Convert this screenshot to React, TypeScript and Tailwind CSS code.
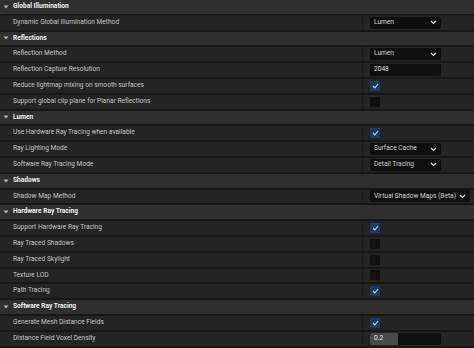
import React from "react";

type Field =
  | { kind: "select"; value: string; wide?: boolean }
  | { kind: "text"; value: string }
  | { kind: "check"; on: boolean }
  | { kind: "slider"; value: string; pct: number };

type Item = { label: string; field: Field };
type Section = { title: string; items: Item[] };

const sections: Section[] = [
  {
    title: "Global Illumination",
    items: [{ label: "Dynamic Global Illumination Method", field: { kind: "select", value: "Lumen" } }],
  },
  {
    title: "Reflections",
    items: [
      { label: "Reflection Method", field: { kind: "select", value: "Lumen" } },
      { label: "Reflection Capture Resolution", field: { kind: "text", value: "2048" } },
      { label: "Reduce lightmap mixing on smooth surfaces", field: { kind: "check", on: true } },
      { label: "Support global clip plane for Planar Reflections", field: { kind: "check", on: false } },
    ],
  },
  {
    title: "Lumen",
    items: [
      { label: "Use Hardware Ray Tracing when available", field: { kind: "check", on: true } },
      { label: "Ray Lighting Mode", field: { kind: "select", value: "Surface Cache" } },
      { label: "Software Ray Tracing Mode", field: { kind: "select", value: "Detail Tracing" } },
    ],
  },
  {
    title: "Shadows",
    items: [{ label: "Shadow Map Method", field: { kind: "select", value: "Virtual Shadow Maps (Beta)", wide: true } }],
  },
  {
    title: "Hardware Ray Tracing",
    items: [
      { label: "Support Hardware Ray Tracing", field: { kind: "check", on: true } },
      { label: "Ray Traced Shadows", field: { kind: "check", on: false } },
      { label: "Ray Traced Skylight", field: { kind: "check", on: false } },
      { label: "Texture LOD", field: { kind: "check", on: false } },
      { label: "Path Tracing", field: { kind: "check", on: true } },
    ],
  },
  {
    title: "Software Ray Tracing",
    items: [
      { label: "Generate Mesh Distance Fields", field: { kind: "check", on: true } },
      { label: "Distance Field Voxel Density", field: { kind: "slider", value: "0.2", pct: 40 } },
    ],
  },
];

function Chevron() {
  return (
    <svg width="7" height="5" viewBox="0 0 7 5" className="shrink-0">
      <path d="M1 1 L3.5 3.5 L6 1" fill="none" stroke="#e0e0e0" strokeWidth="1.2" />
    </svg>
  );
}

function Value({ field }: { field: Field }) {
  if (field.kind === "select") {
    return (
      <div
        className={`flex h-[12px] items-center justify-between whitespace-nowrap rounded-[2px] bg-[#0f0f0f] pl-[4px] pr-[4px] text-[#d0d0d0] ${
          field.wide ? "w-[100px]" : "w-[71px]"
        }`}
      >
        <span>{field.value}</span>
        <Chevron />
      </div>
    );
  }
  if (field.kind === "text") {
    return (
      <div className="flex h-[12px] w-[71px] items-center rounded-[2px] bg-[#0f0f0f] pl-[4px] text-[#e0e0e0]">
        {field.value}
      </div>
    );
  }
  if (field.kind === "slider") {
    return (
      <div className="relative flex h-[12px] w-[71px] items-center overflow-hidden rounded-[2px] bg-[#0f0f0f] text-[#e8e8e8]">
        <div className="absolute inset-y-0 left-0 bg-[#4a4a4a]" style={{ width: `${field.pct}%` }} />
        <span className="relative pl-[4px]">{field.value}</span>
      </div>
    );
  }
  return field.on ? (
    <div className="flex h-[10px] w-[10px] items-center justify-center rounded-[1px] bg-[#1c3a63]">
      <svg width="7" height="6" viewBox="0 0 7 6">
        <path d="M1 3.2 L2.8 5 L6 1" fill="none" stroke="#c9dcf5" strokeWidth="1.1" />
      </svg>
    </div>
  ) : (
    <div className="h-[10px] w-[10px] rounded-[1px] bg-[#111111]" />
  );
}

export default function App() {
  return (
    <div
      className="flex h-[348px] w-[474px] flex-col gap-[2px] overflow-hidden bg-[#171717] text-[6.6px] whitespace-nowrap"
      style={{ fontFamily: "Roboto, 'Liberation Sans', sans-serif" }}
    >
      {sections.map((s) => (
        <React.Fragment key={s.title}>
          <div className="flex h-[13.8px] shrink-0 items-center bg-[#2f2f2f] font-bold text-[#f0f0f0]">
            <svg width="13" height="6" viewBox="0 0 13 6" className="shrink-0">
              <path d="M3.5 1.5 L8.5 1.5 L6 4.5 Z" fill="#b8b8b8" />
            </svg>
            <span>{s.title}</span>
          </div>
          {s.items.map((it) => (
            <div key={it.label} className="flex h-[13.8px] shrink-0 bg-[#242424]">
              <div className="flex w-[362px] items-center pl-[13px] text-[#c4c4c4]">{it.label}</div>
              <div className="w-px bg-[#1a1a1a]" />
              <div className="flex flex-1 items-center pl-[7px]">
                <Value field={it.field} />
              </div>
            </div>
          ))}
        </React.Fragment>
      ))}
    </div>
  );
}
